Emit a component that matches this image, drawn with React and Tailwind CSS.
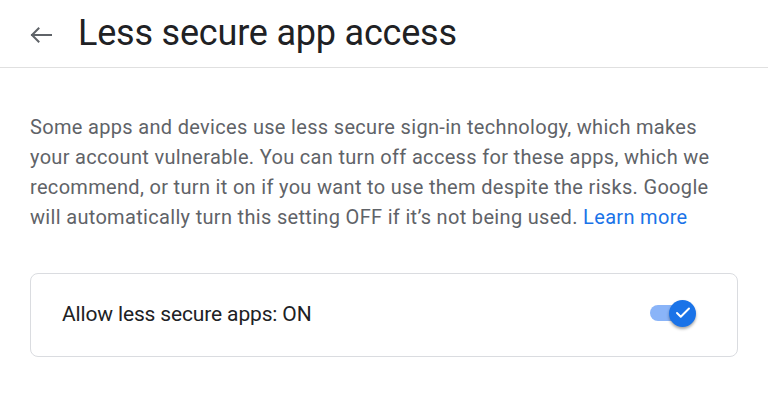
import { Check } from 'lucide-react';

export default function App() {
  return (
    <div className="w-[768px] h-[401px] bg-white overflow-hidden font-['Roboto',sans-serif]">
      <div className="h-[68px] flex items-center border-b border-[#e0e0e0]">
        <div className="w-[78px] pl-[30px] pt-[3px]">
          <svg width="22" height="16" viewBox="0 0 22 16" fill="none" stroke="#5f6368" strokeWidth="2" strokeLinecap="square">
            <path d="M2 8H21" />
            <path d="M8.5 1.5L2 8l6.5 6.5" />
          </svg>
        </div>
        <h1 className="text-[36px] text-[#202124] tracking-[-0.2px] leading-none pb-[2px]">Less secure app access</h1>
      </div>

      <div className="px-[30px] pt-[44px]">
        <p className="text-[20px] leading-[30px] text-[#5f6368] w-[692px] tracking-[0.32px]">
          Some apps and devices use less secure sign-in technology, which makes your account vulnerable. You can turn off access for these apps, which we recommend, or turn it on if you want to use them despite the risks. Google will automatically turn this setting OFF if it’s not being used.{' '}
          <span className="text-[#1a73e8]">Learn more</span>
        </p>

        <div className="mt-[41px] w-[708px] h-[84px] border border-[#dadce0] rounded-[8px] flex items-center justify-between pl-[31px] pr-[41px]">
          <span className="text-[21px] text-[#202124] tracking-[-0.15px]">Allow less secure apps: ON</span>
          <div className="relative w-[46px] h-[28px] flex items-center -mt-[4px]">
            <div className="w-[38px] h-[16px] rounded-full bg-[#8ab4f8]" />
            <div className="absolute right-0 w-[27px] h-[27px] rounded-full bg-[#1a73e8] shadow-[0_2px_3px_rgba(0,0,0,0.35)] flex items-center justify-center">
              <Check className="w-[18px] h-[18px] text-white" strokeWidth={2.6} />
            </div>
          </div>
        </div>
      </div>
    </div>
  );
}
